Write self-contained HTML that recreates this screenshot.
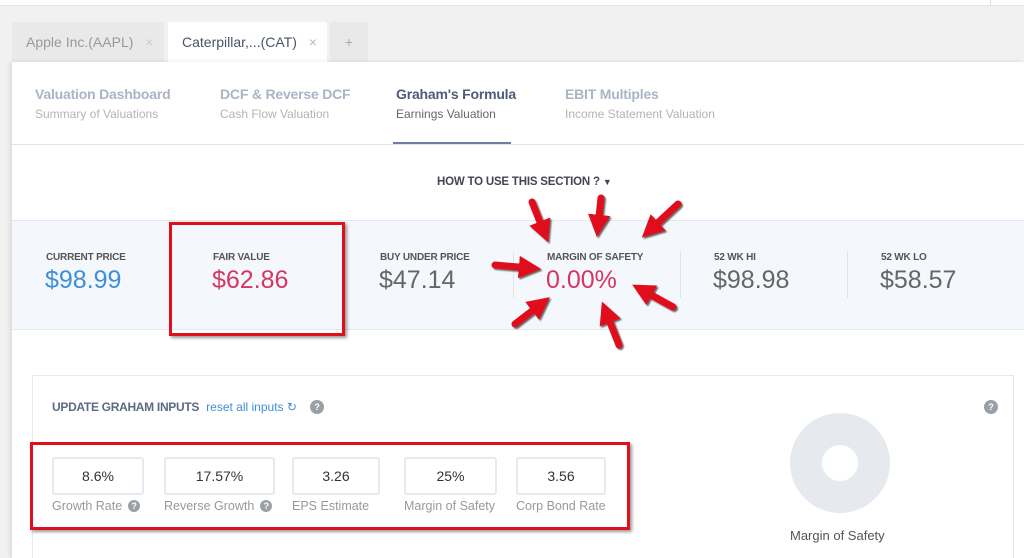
<!DOCTYPE html>
<html><head><style>
html,body{margin:0;width:1024px;height:558px;overflow:hidden}
body{background:#f1f1f1;font-family:"Liberation Sans",sans-serif;position:relative}
.a{position:absolute}
.tab{position:absolute;top:22px;height:40px;line-height:40px;font-size:14px}
.nt{position:absolute;top:86px;font-size:14px;color:#a9b4c7;font-weight:bold;letter-spacing:-0.2px}
.ns{position:absolute;top:107px;font-size:12px;color:#b3b3b3}
.lb{position:absolute;top:252px;font-size:10px;color:#555;font-weight:bold;letter-spacing:-0.2px}
.v{position:absolute;top:266px;font-size:25px;color:#666}
.in{position:absolute;top:457px;border:2px solid #e6eaf0;border-radius:3px;text-align:center;line-height:34px;font-size:14px;color:#333;box-sizing:border-box;height:38px}
.il{position:absolute;top:499px;font-size:12.5px;color:#999}
.q{display:inline-block;width:12px;height:12px;border-radius:50%;background:#9aa0a6;color:#fff;font-size:9px;line-height:12px;text-align:center;font-weight:bold;vertical-align:1px;margin-left:6px}
</style></head><body>
<div class="a" style="left:0;top:0;width:1024px;height:5px;background:#fff;border-bottom:1px solid #e4e4e4"></div>
<div class="a" style="left:990px;top:0;width:1px;height:5px;background:#ddd"></div>
<div class="tab" style="left:12px;width:152px;background:#e9e9e9;color:#999;padding-left:14px;box-sizing:border-box">Apple Inc.(AAPL) <span style="color:#ccc;margin-left:8px">×</span></div>
<div class="tab" style="left:168px;width:159px;background:#fff;color:#4a5468;padding-left:14px;box-sizing:border-box">Caterpillar,...(CAT) <span style="color:#bbb;margin-left:8px">×</span></div>
<div class="tab" style="left:330px;width:38px;background:#e9e9e9;color:#aaa;text-align:center">+</div>
<div class="a" style="left:12px;top:62px;width:1012px;height:496px;background:#fff;box-shadow:-2px 0 4px rgba(0,0,0,.1)"></div>
<div class="nt" style="left:35px">Valuation Dashboard</div><div class="ns" style="left:35px">Summary of Valuations</div>
<div class="nt" style="left:220px">DCF &amp; Reverse DCF</div><div class="ns" style="left:220px">Cash Flow Valuation</div>
<div class="nt" style="left:396px;color:#4f5b78">Graham's Formula</div><div class="ns" style="left:396px;color:#666">Earnings Valuation</div>
<div class="nt" style="left:565px">EBIT Multiples</div><div class="ns" style="left:565px">Income Statement Valuation</div>
<div class="a" style="left:12px;top:144px;width:1012px;height:1px;background:#e3e3e3"></div>
<div class="a" style="left:393px;top:142px;width:118px;height:2px;background:#6a7fa0"></div>
<div class="a" style="left:437px;top:176px;font-size:11.5px;color:#445;font-weight:bold;letter-spacing:-0.2px">HOW TO USE THIS SECTION ? <span style="font-size:9px">▼</span></div>
<div class="a" style="left:12px;top:220px;width:1012px;height:108px;background:#f4f7fb;border-top:1px solid #e2e8f0;border-bottom:1px solid #e2e8f0"></div>
<div class="a" style="left:513px;top:252px;width:1px;height:46px;background:#e0e4ea"></div>
<div class="a" style="left:680px;top:252px;width:1px;height:46px;background:#e0e4ea"></div>
<div class="a" style="left:847px;top:252px;width:1px;height:46px;background:#e0e4ea"></div>
<div class="lb" style="left:46px">CURRENT PRICE</div><div class="v" style="left:45px;color:#3d8fdb">$98.99</div>
<div class="lb" style="left:213px">FAIR VALUE</div><div class="v" style="left:212px;color:#d6365f">$62.86</div>
<div class="lb" style="left:380px">BUY UNDER PRICE</div><div class="v" style="left:379px">$47.14</div>
<div class="lb" style="left:547px">MARGIN OF SAFETY</div><div class="v" style="left:546px;color:#d6365f">0.00%</div>
<div class="lb" style="left:714px">52 WK HI</div><div class="v" style="left:713px">$98.98</div>
<div class="lb" style="left:881px">52 WK LO</div><div class="v" style="left:880px">$58.57</div>
<div class="a" style="left:169px;top:222px;width:170px;height:108px;border:3px solid #e0101a;box-shadow:2px 2px 3px rgba(0,0,0,.4)"></div>
<div class="a" style="left:32px;top:375px;width:980px;height:190px;border:1px solid #e6e9ee"></div>
<div class="a" style="left:52px;top:400px;font-size:12px;color:#5c6b85;font-weight:bold;letter-spacing:-0.3px">UPDATE GRAHAM INPUTS <span style="color:#3d8fdb;font-size:12px;margin-left:4px;font-weight:normal;letter-spacing:0">reset all inputs ↻</span> <span class="q" style="width:14px;height:14px;line-height:14px;margin-left:10px">?</span></div>
<div class="a" style="left:978px;top:398px"><span class="q" style="width:14px;height:14px;line-height:14px">?</span></div>
<div class="a" style="left:30px;top:442px;width:594px;height:82px;border:3px solid #e0101a;box-shadow:2px 2px 3px rgba(0,0,0,.4)"></div>
<div class="in" style="left:52px;width:92px">8.6%</div>
<div class="in" style="left:164px;width:111px">17.57%</div>
<div class="in" style="left:292px;width:88px">3.26</div>
<div class="in" style="left:404px;width:93px">25%</div>
<div class="in" style="left:516px;width:90px">3.56</div>
<div class="il" style="left:52px">Growth Rate<span class="q">?</span></div>
<div class="il" style="left:164px">Reverse Growth<span class="q">?</span></div>
<div class="il" style="left:292px">EPS Estimate</div>
<div class="il" style="left:404px">Margin of Safety</div>
<div class="il" style="left:516px">Corp Bond Rate</div>
<div class="a" style="left:790px;top:413px;width:36px;height:36px;border:32px solid #e6e9ee;border-radius:50%"></div>
<div class="a" style="left:790px;top:528px;font-size:13px;color:#555">Margin of Safety</div>
<svg class="a" style="left:0;top:0" width="1024" height="558">
<defs><marker id="h" markerWidth="3.2" markerHeight="3.2" refX="1.6" refY="1.6" orient="auto"><path d="M0,0 L3.2,1.6 L0,3.2z" fill="#e0101a"/></marker>
<filter id="s"><feDropShadow dx="1.5" dy="1.5" stdDeviation="0.8" flood-color="#000" flood-opacity="0.6"/></filter></defs>
<g stroke="#e0101a" stroke-width="7" stroke-linecap="round" marker-end="url(#h)" filter="url(#s)">
<line x1="532" y1="202" x2="544" y2="232"/>
<line x1="601" y1="198" x2="598" y2="226"/>
<line x1="678" y1="204" x2="650" y2="230"/>
<line x1="495" y1="265" x2="530" y2="268"/>
<line x1="515" y1="324" x2="541" y2="304"/>
<line x1="619" y1="345" x2="606" y2="312"/>
<line x1="673" y1="307" x2="642" y2="290"/>
</g></svg>
</body></html>
